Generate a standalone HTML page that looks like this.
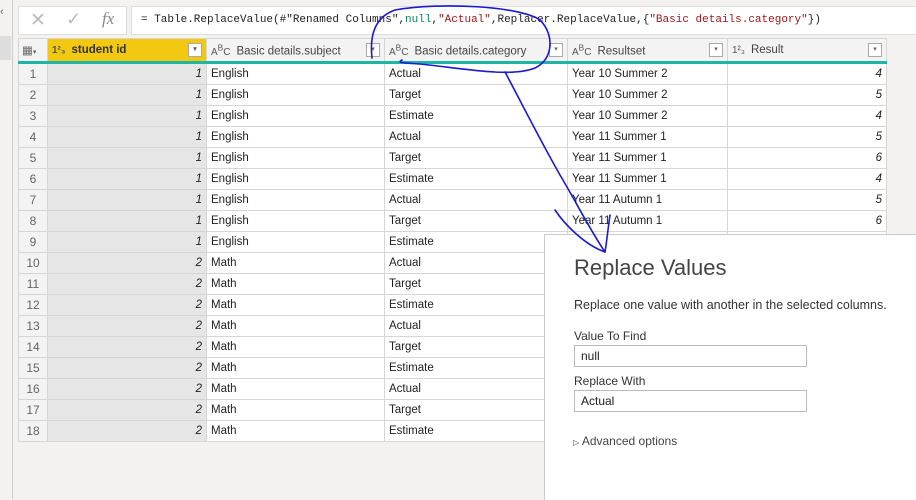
<!DOCTYPE html><html><head><style>
body{margin:0;width:916px;height:499px;overflow:hidden;background:#f3f2f1;font-family:"Liberation Sans",sans-serif;position:relative}
.a{position:absolute}
table{border-collapse:collapse;position:absolute;left:18px;top:38px;font-size:11.5px;color:#222;table-layout:fixed}
td{border:1px solid #d6d6d6;height:20px;padding:0 4px;background:#fff;white-space:nowrap;overflow:hidden}
td.n{background:#f3f3f3;color:#666;text-align:center;font-size:12px}
td.id{background:#e6e6e6;text-align:right;font-style:italic}
td.r{text-align:right;font-style:italic}
th{height:22px;background:#f3f3f3;border:1px solid #d6d6d6;border-bottom:3px solid #1fb5a5;text-align:left;font-weight:normal;color:#444;padding:0 4px;position:relative;font-size:11.5px;white-space:nowrap;overflow:hidden}
th .dd{position:absolute;right:4px;top:4px;width:12px;height:12px;border:1px solid #aaa;background:#fff;font-size:7px;text-align:center;line-height:12px;color:#666}
.t{font-size:10px;color:#555;margin-right:6px}
</style></head><body>
<div class="a" style="left:0;top:0;width:12px;height:499px;background:#f3f2f1;border-right:1px solid #ccc"></div>
<div class="a" style="left:0;top:36px;width:11px;height:24px;background:#ddd"></div>
<div class="a" style="left:0;top:6px;font-size:11px;color:#666">‹</div>
<div class="a" style="left:18px;top:6px;width:107px;height:27px;background:#fff;border:1px solid #ddd"></div>
<div class="a" style="left:30px;top:9px;font-size:19px;color:#bbb">✕</div>
<div class="a" style="left:66px;top:9px;font-size:18px;color:#bbb">✓</div>
<div class="a" style="left:102px;top:9px;font-size:17px;color:#888;font-family:'Liberation Serif',serif;font-style:italic">fx</div>
<div class="a" style="left:131px;top:6px;width:785px;height:27px;background:#fff;border:1px solid #ddd;font-family:'Liberation Mono',monospace;font-size:11px;line-height:27px;padding-left:9px;color:#222;white-space:nowrap">= Table.ReplaceValue(#"Renamed Columns",<span style="color:#098658">null</span>,<span style="color:#a31515">"Actual"</span>,Replacer.ReplaceValue,{<span style="color:#a31515">"Basic details.category"</span>})</div>
<table>
<colgroup><col style="width:29px"><col style="width:159px"><col style="width:178px"><col style="width:183px"><col style="width:160px"><col style="width:159px"></colgroup>
<tr><th style="padding:0 3px;color:#666">▦<span style="font-size:7px">▾</span></th><th style="background:#f2c811;font-weight:bold;color:#333"><span class="t">1²₃</span>student id<span class="dd">▾</span></th><th><span class="t">A<sup>B</sup>C</span>Basic details.subject<span class="dd">▾</span></th><th><span class="t">A<sup>B</sup>C</span>Basic details.category<span class="dd">▾</span></th><th><span class="t">A<sup>B</sup>C</span>Resultset<span class="dd">▾</span></th><th><span class="t">1²₃</span>Result<span class="dd">▾</span></th></tr>
<tr><td class="n">1</td><td class="id">1</td><td>English</td><td>Actual</td><td>Year 10 Summer 2</td><td class="r">4</td></tr>
<tr><td class="n">2</td><td class="id">1</td><td>English</td><td>Target</td><td>Year 10 Summer 2</td><td class="r">5</td></tr>
<tr><td class="n">3</td><td class="id">1</td><td>English</td><td>Estimate</td><td>Year 10 Summer 2</td><td class="r">4</td></tr>
<tr><td class="n">4</td><td class="id">1</td><td>English</td><td>Actual</td><td>Year 11 Summer 1</td><td class="r">5</td></tr>
<tr><td class="n">5</td><td class="id">1</td><td>English</td><td>Target</td><td>Year 11 Summer 1</td><td class="r">6</td></tr>
<tr><td class="n">6</td><td class="id">1</td><td>English</td><td>Estimate</td><td>Year 11 Summer 1</td><td class="r">4</td></tr>
<tr><td class="n">7</td><td class="id">1</td><td>English</td><td>Actual</td><td>Year 11 Autumn 1</td><td class="r">5</td></tr>
<tr><td class="n">8</td><td class="id">1</td><td>English</td><td>Target</td><td>Year 11 Autumn 1</td><td class="r">6</td></tr>
<tr><td class="n">9</td><td class="id">1</td><td>English</td><td>Estimate</td><td></td><td></td></tr>
<tr><td class="n">10</td><td class="id">2</td><td>Math</td><td>Actual</td><td></td><td></td></tr>
<tr><td class="n">11</td><td class="id">2</td><td>Math</td><td>Target</td><td></td><td></td></tr>
<tr><td class="n">12</td><td class="id">2</td><td>Math</td><td>Estimate</td><td></td><td></td></tr>
<tr><td class="n">13</td><td class="id">2</td><td>Math</td><td>Actual</td><td></td><td></td></tr>
<tr><td class="n">14</td><td class="id">2</td><td>Math</td><td>Target</td><td></td><td></td></tr>
<tr><td class="n">15</td><td class="id">2</td><td>Math</td><td>Estimate</td><td></td><td></td></tr>
<tr><td class="n">16</td><td class="id">2</td><td>Math</td><td>Actual</td><td></td><td></td></tr>
<tr><td class="n">17</td><td class="id">2</td><td>Math</td><td>Target</td><td></td><td></td></tr>
<tr><td class="n">18</td><td class="id">2</td><td>Math</td><td>Estimate</td><td></td><td></td></tr>
</table>
<div class="a" style="left:544px;top:234px;width:372px;height:265px;background:#fff;border-left:1px solid #ccc;border-top:1px solid #ccc"></div>
<div class="a" style="left:574px;top:255px;font-size:22px;color:#444">Replace Values</div>
<div class="a" style="left:574px;top:298px;font-size:12.5px;color:#333">Replace one value with another in the selected columns.</div>
<div class="a" style="left:574px;top:329px;font-size:12px;color:#333">Value To Find</div>
<div class="a" style="left:574px;top:345px;width:225px;height:20px;border:1px solid #bbb;font-size:12px;line-height:20px;padding-left:6px;color:#222">null</div>
<div class="a" style="left:574px;top:374px;font-size:12px;color:#333">Replace With</div>
<div class="a" style="left:574px;top:390px;width:225px;height:20px;border:1px solid #bbb;font-size:12px;line-height:20px;padding-left:6px;color:#222">Actual</div>
<div class="a" style="left:573px;top:434px;font-size:12px;color:#444"><span style="font-size:8px">▷</span> Advanced options</div>
<svg class="a" style="left:0;top:0" width="916" height="499"><g fill="none" stroke="#1a1ad0" stroke-width="1.6" stroke-linecap="round">
<path d="M372 58 C370 40 372 18 395 10 C440 2 520 6 540 20 C555 35 553 60 535 68 C510 78 460 68 420 64 C405 63 396 63 402 60"/>
<path d="M505 72 C520 100 540 140 560 175 C575 200 590 230 605 252"/>
<path d="M555 210 C565 225 585 245 605 252 C607 240 608 228 610 215"/>
</g></svg>
</body></html>
